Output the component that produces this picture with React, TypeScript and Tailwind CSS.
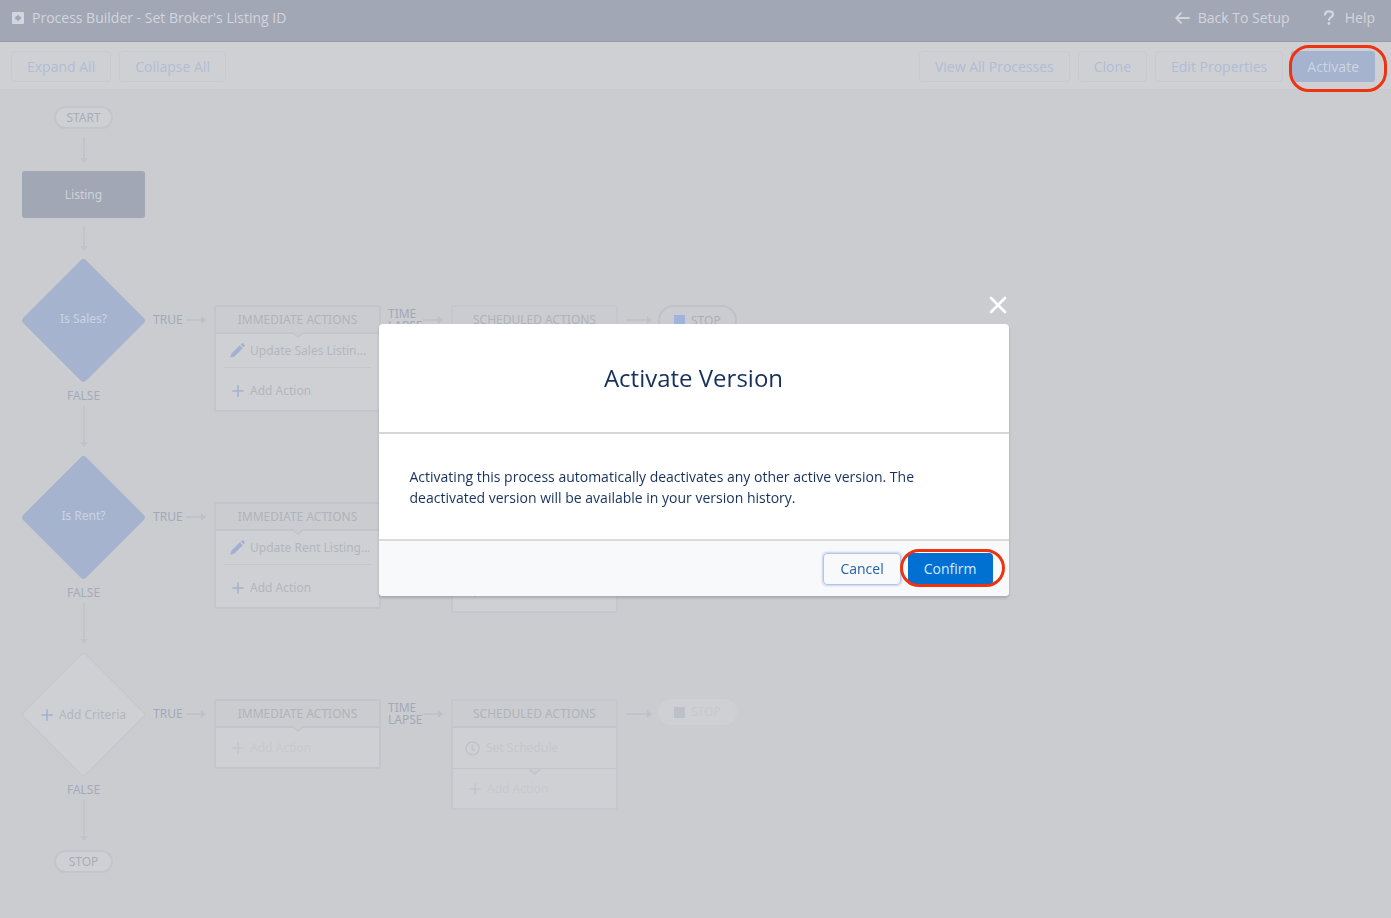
import type { ReactNode } from 'react'
import { clsx } from 'clsx'

interface Criteria {
  name: string
  update?: string
}

const criterias: Criteria[] = [
  { name: 'Is Sales?', update: 'Update Sales Listin...' },
  { name: 'Is Rent?', update: 'Update Rent Listing...' },
  { name: 'Add Criteria' },
]

export default function App() {
  return (
    <div className="min-h-screen bg-[#cbccd0] font-['Open_Sans',sans-serif] text-sm">
      <Header />
      <Toolbar />
      <Canvas />
      <ActivateDialog />
    </div>
  )
}

function Header() {
  return (
    <header className="flex h-[42px] items-center border-b border-[#969ba8] bg-[#a1a7b5] pr-4 pb-1.5 pl-3 text-[#d3d6dc]">
      <svg className="mr-2 size-3" viewBox="0 0 12 12">
        <path
          fill="currentColor"
          fillRule="evenodd"
          d="M1 0h10a1 1 0 0 1 1 1v10a1 1 0 0 1-1 1H1a1 1 0 0 1-1-1V1a1 1 0 0 1 1-1ZM6 2.4 7.2 4.2 8.6 4.4 8.4 5.2 9.6 6 8.4 6.8 8.6 7.6 7.2 7.8 6 9.6 4.8 7.8 3.4 7.6 3.6 6.8 2.4 6 3.6 5.2 3.4 4.4 4.8 4.2Z"
        />
      </svg>
      <h1>Process Builder - Set Broker's Listing ID</h1>
      <nav className="ml-auto flex items-center">
        <a href="#setup" className="flex items-center gap-2">
          <svg
            className="h-3 w-[15px]"
            viewBox="0 0 15 12"
            fill="none"
            stroke="currentColor"
            strokeWidth="1.8"
            strokeLinecap="round"
            strokeLinejoin="round"
          >
            <path d="M14 6H1.5M6 1.2 1.2 6 6 10.8" />
          </svg>
          Back To Setup
        </a>
        <a href="#help" className="ml-[33px] flex items-center gap-2.5">
          <svg
            className="h-[15px] w-3"
            viewBox="0 0 12 15"
            fill="none"
            stroke="currentColor"
            strokeWidth="2.2"
            strokeLinecap="round"
          >
            <path d="M2 4.6C2.2 2.5 3.6 1.4 6 1.4s4 1.3 4 3.2c0 2.7-4 2.8-4 5.2" />
            <circle cx="6" cy="13.5" r="1.4" fill="currentColor" stroke="none" />
          </svg>
          Help
        </a>
      </nav>
    </header>
  )
}

function Toolbar() {
  return (
    <div className="flex h-12 items-center gap-2 border-b border-[#c9cacf] bg-[#cfd0d4] pt-0.5 pr-4 pl-[11px]">
      <ToolbarButton>Expand All</ToolbarButton>
      <ToolbarButton>Collapse All</ToolbarButton>
      <span className="grow" />
      <ToolbarButton>View All Processes</ToolbarButton>
      <ToolbarButton>Clone</ToolbarButton>
      <ToolbarButton>Edit Properties</ToolbarButton>
      <div className="relative">
        <button className="block h-[31px] rounded-[3px] bg-[#a5b3cf] px-4 text-[#cdd5e3]">
          Activate
        </button>
        <span className="pointer-events-none absolute -top-1.5 -right-3 -bottom-2.5 -left-0.5 z-20 rounded-[20px] border-[3px] border-[#ee3311]" />
      </div>
    </div>
  )
}

function ToolbarButton({ children }: { children: ReactNode }) {
  return (
    <button className="h-[31px] rounded-[4px] border border-[#c8cad0] px-[15px] text-[#b0bdd5]">
      {children}
    </button>
  )
}

function Canvas() {
  return (
    <main className="px-[22px] pt-4 font-['Noto_Sans',sans-serif] text-xs">
      <div className="flex w-[123px] flex-col items-center">
        <Terminal>START</Terminal>
        <ArrowDown className="my-2 h-[26px]" />
        <div className="flex h-[47px] w-full items-center justify-center rounded-[3px] bg-[#a1a7b5] text-[#cfd3da]">
          Listing
        </div>
        <ArrowDown className="my-2 h-[25px]" />
      </div>
      {criterias.map((criteria) => (
        <CriteriaRow key={criteria.name} criteria={criteria} />
      ))}
      <div className="flex w-[123px] flex-col items-center">
        <Terminal>STOP</Terminal>
      </div>
    </main>
  )
}

function Terminal({ children }: { children: ReactNode }) {
  return (
    <div className="flex h-[23px] w-[59px] items-center justify-center rounded-full border-2 border-[#c3c5ca] bg-[#cfd0d4] text-[#a9adb7]">
      {children}
    </div>
  )
}

function CriteriaRow({ criteria }: { criteria: Criteria }) {
  const empty = !criteria.update
  return (
    <div className="flex h-[197px]">
      <div className="flex w-[123px] flex-col items-center">
        <div className="grid size-[123px] shrink-0 place-items-center">
          <div
            className={clsx(
              'col-start-1 row-start-1 size-[89px] rotate-45 rounded-[4px]',
              empty ? 'border border-[#c4c6cb] bg-[#cfd0d4]' : 'bg-[#a5b3cf]',
            )}
          />
          <div
            className={clsx(
              'z-0 col-start-1 row-start-1 flex items-center gap-1.5',
              empty ? 'text-[#b3b6bd]' : 'pb-1 text-[#cbd3e1]',
            )}
          >
            {empty && <PlusIcon className="size-3 text-[#9fb2d6]" />}
            {criteria.name}
          </div>
        </div>
        <span className="mt-1 leading-5 text-[#a3abba]">FALSE</span>
        <ArrowDown className="h-[41px]" />
      </div>
      <span className="mt-[53px] ml-2 w-[33px] shrink-0 text-[#a1a9b9]">
        TRUE
      </span>
      <ArrowRight className="mt-[57px] w-5" />
      <div className="mt-[46px] ml-2 w-[167px] shrink-0 self-start rounded-[2px] border-2 border-[#c4c5ca] bg-[#cfd0d4]">
        <BoxTitle notch>IMMEDIATE ACTIONS</BoxTitle>
        {criteria.update && (
          <div className="mx-2 flex h-[34px] items-center border-b border-[#c5c7cb] pl-1.5 text-[#b3b6bd]">
            <PencilIcon />
            <span className="ml-[5px] whitespace-nowrap">{criteria.update}</span>
          </div>
        )}
        <AddAction disabled={empty} />
      </div>
      <span className="mt-[49px] ml-[7px] w-[35px] shrink-0 leading-3 text-[#a1a9b9]">
        TIME LAPSE
      </span>
      <ArrowRight className="mt-[57px] w-5" />
      <div className="mt-[46px] ml-2 w-[167px] shrink-0 self-start rounded-[2px] border-2 border-[#c6c7cc] bg-[#cfd0d4]">
        <BoxTitle>SCHEDULED ACTIONS</BoxTitle>
        <div className="flex h-10 items-center gap-1.5 pl-3 text-[#c5c7cb]">
          <ClockIcon />
          Set Schedule
        </div>
        <div className="relative border-t border-[#c4c5ca]">
          <Notch className="top-0" />
          <AddAction disabled />
        </div>
      </div>
      <ArrowRight className="mt-[57px] ml-2 w-[26px]" />
      <div
        className={clsx(
          'mt-[46px] ml-1.5 flex shrink-0 items-center gap-1.5 rounded-full border-2 px-3.5',
          empty
            ? 'h-[26px] border-[#cfd0d4] bg-[#cfd0d4] text-[#c7c9cd]'
            : 'h-[31px] border-[#bfc1c7] text-[#abafb8]',
        )}
      >
        <span
          className={clsx('size-[11px]', empty ? 'bg-[#bec0c7]' : 'bg-[#a0b3da]')}
        />
        STOP
      </div>
    </div>
  )
}

function BoxTitle({ children, notch }: { children: ReactNode; notch?: boolean }) {
  return (
    <div className="relative flex h-[27px] items-center justify-center border-b-2 border-[#c4c5ca] bg-[#cbccd0] whitespace-nowrap text-[#b0b3ba]">
      {children}
      {notch && <Notch className="top-full" />}
    </div>
  )
}

function Notch({ className }: { className: string }) {
  return (
    <svg
      className={clsx('absolute left-1/2 h-1.5 w-3 -translate-x-1/2', className)}
      viewBox="0 0 12 6"
    >
      <path d="M0 0 6 5 12 0" fill="#cbccd0" stroke="#c4c5ca" strokeWidth="1.5" />
    </svg>
  )
}

function AddAction({ disabled }: { disabled?: boolean }) {
  return (
    <div
      className={clsx(
        'flex items-center gap-1.5 pl-4',
        disabled ? 'h-[39px] text-[#c7c9cd]' : 'h-[42px] pt-1 text-[#b3b6bd]',
      )}
    >
      <PlusIcon
        className={clsx('size-3', disabled ? 'text-[#c3c5ca]' : 'text-[#a5b3cf]')}
      />
      Add Action
    </div>
  )
}

function ActivateDialog() {
  return (
    <div className="fixed inset-0 z-10 flex items-center justify-center pt-0.5 pr-1">
      <div
        role="dialog"
        aria-labelledby="dialog-title"
        className="relative w-full max-w-[630px] rounded-[4px] bg-white text-[#16325c] shadow-[0_2px_3px_rgba(0,0,0,0.18)]"
      >
        <button
          aria-label="Close"
          className="absolute -top-7 right-0.5 text-white"
        >
          <svg
            className="size-[18px]"
            viewBox="0 0 18 18"
            fill="none"
            stroke="currentColor"
            strokeWidth="2.6"
            strokeLinecap="round"
          >
            <path d="m2 2 14 14M16 2 2 16" />
          </svg>
        </button>
        <div className="flex h-[110px] items-center justify-center border-b-2 border-[#d5d6d9]">
          <h2 id="dialog-title" className="text-2xl">
            Activate Version
          </h2>
        </div>
        <p className="h-[107px] border-b-2 border-[#d8dadd] px-[31px] pt-8 leading-[21px]">
          Activating this process automatically deactivates any other active
          version. The deactivated version will be available in your version
          history.
        </p>
        <div className="flex h-[55px] items-center justify-end gap-[7px] rounded-b-[4px] bg-[#f8f9fb] pr-4">
          <button className="h-8 rounded-[4px] border border-[#b4c6e2] px-4 text-[#2461a8] shadow-[0_0_2px_1px_#c4d3ea]">
            Cancel
          </button>
          <div className="relative">
            <button className="block h-8 rounded-[4px] bg-[#0070d2] px-4 text-[#d6eaff]">
              Confirm
            </button>
            <span className="pointer-events-none absolute -top-1 -right-3 -bottom-0.5 -left-2 rounded-[20px] border-[3px] border-[#ee3311]" />
          </div>
        </div>
      </div>
    </div>
  )
}

function ArrowDown({ className }: { className?: string }) {
  return (
    <div className={clsx('flex shrink-0 flex-col items-center', className)}>
      <span className="w-0.5 grow bg-[#c3c4c9]" />
      <svg className="h-[5px] w-2" viewBox="0 0 8 5">
        <path d="M0 0h8L4 5Z" fill="#c1c3c8" />
      </svg>
    </div>
  )
}

function ArrowRight({ className }: { className?: string }) {
  return (
    <div className={clsx('flex h-2 shrink-0 items-center', className)}>
      <span className="h-0.5 grow bg-[#c1c3c8]" />
      <svg className="h-2 w-[5px]" viewBox="0 0 5 8">
        <path d="M0 0v8l5-4Z" fill="#bec0c6" />
      </svg>
    </div>
  )
}

function PlusIcon({ className }: { className?: string }) {
  return (
    <svg
      className={className}
      viewBox="0 0 12 12"
      fill="none"
      stroke="currentColor"
      strokeWidth="1.6"
      strokeLinecap="round"
    >
      <path d="M6 .8v10.4M.8 6h10.4" />
    </svg>
  )
}

function PencilIcon() {
  return (
    <svg className="size-[15px] text-[#a0b1d1]" viewBox="0 0 15 15">
      <path
        fill="currentColor"
        d="M9.8 2.3 12.7 5.2 4.5 13.4.7 14.6a.3.3 0 0 1-.4-.4L1.5 10.5ZM10.7 1.4 11.7.5a1.2 1.2 0 0 1 1.6 0l1.2 1.2a1.2 1.2 0 0 1 0 1.6l-1 1Z"
      />
    </svg>
  )
}

function ClockIcon() {
  return (
    <svg
      className="size-[15px] text-[#c1c3c8]"
      viewBox="0 0 15 15"
      fill="none"
      stroke="currentColor"
      strokeWidth="1.5"
      strokeLinecap="round"
    >
      <circle cx="7.5" cy="7.5" r="6.5" />
      <path d="M7.3 4v3.6l2 2.2" />
    </svg>
  )
}
